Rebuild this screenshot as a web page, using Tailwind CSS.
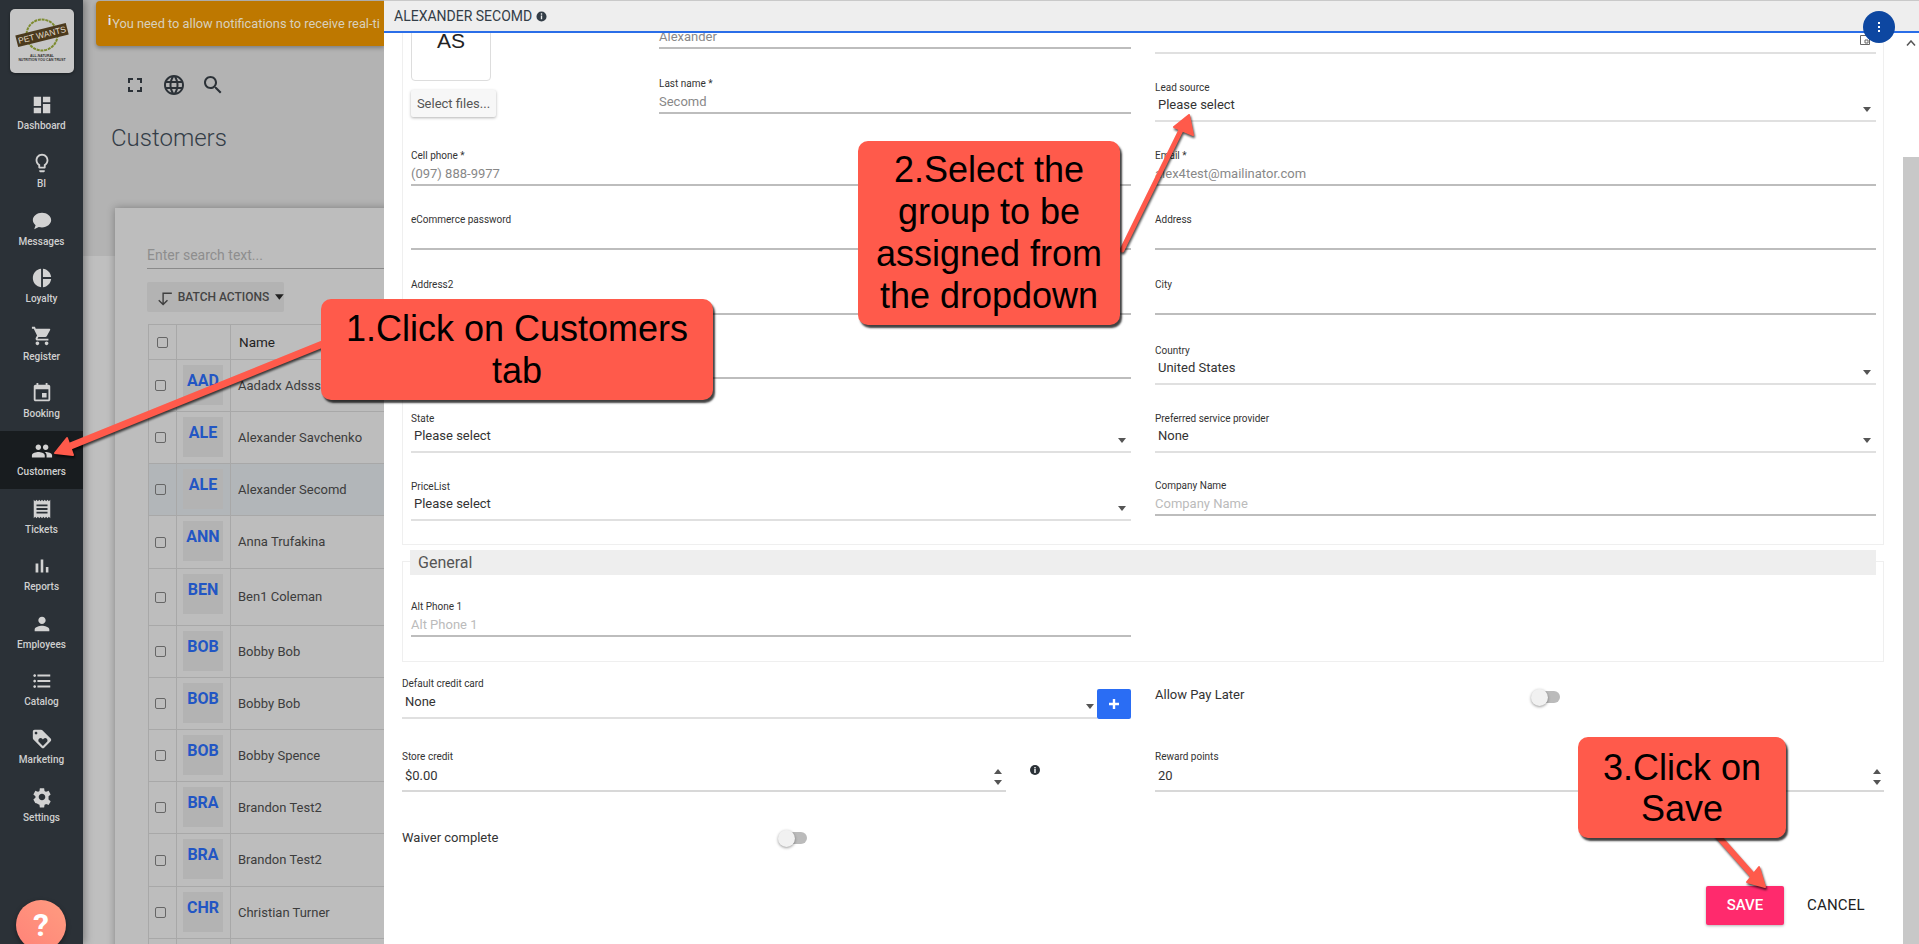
<!DOCTYPE html>
<html lang="en">
<head>
  <meta charset="UTF-8" />
  <title>Customers</title>
  <script src="https://cdn.jsdelivr.net/npm/@tailwindcss/browser@4"></script>
</head>
<body class="bg-white">
<div class="relative flex h-[944px] w-[1919px] overflow-hidden font-['Roboto',sans-serif]">

  <!-- sidebar -->
  <aside class="relative z-10 h-full w-[83px] shrink-0 bg-[#2b3137] shadow-[2px_0_8px_rgba(0,0,0,0.35)]">
    <div class="pl-[10px] pt-[9px]">
      <div class="h-[64px] w-[64px] rounded-[5px] bg-[#c6c6c6] shadow-[0_1px_3px_rgba(0,0,0,0.4)]">
        <svg viewBox="0 0 64 64" class="h-[64px] w-[64px]">
          <circle cx="32" cy="26" r="15.5" fill="none" stroke="#7d8b2f" stroke-width="2" stroke-dasharray="3 0.8" />
          <g transform="rotate(-14 32 26)">
            <rect x="6" y="20" width="52" height="12" fill="#4b3a1d" />
            <text x="32" y="29" text-anchor="middle" font-family="Liberation Sans" font-size="8.5" fill="#e2dccb">PET WANTS</text>
          </g>
          <text x="32" y="48" text-anchor="middle" font-family="Liberation Sans" font-size="3.4" font-weight="bold" fill="#333">ALL-NATURAL</text>
          <text x="32" y="52" text-anchor="middle" font-family="Liberation Sans" font-size="3.4" font-weight="bold" fill="#333">NUTRITION YOU CAN TRUST</text>
        </svg>
      </div>
    </div>
    <nav id="nav" class="mt-[12.4px]"></nav>
    <div class="absolute left-[16px] top-[900px] flex h-[50px] w-[50px] items-center justify-center rounded-full bg-gradient-to-tr from-[#ff8278] to-[#ff9c80] text-[32px] font-bold leading-none text-white shadow-[0_2px_5px_rgba(0,0,0,0.4)]">?</div>
  </aside>

  <!-- page behind the panel, dimmed -->
  <main class="h-full flex-1 overflow-hidden bg-[linear-gradient(#b3b3b3_256px,#bfbfbf_256px)]">
    <div class="ml-[13px] mt-[1px] flex h-[45px] w-[288px] items-center overflow-hidden whitespace-nowrap rounded-l-[4px] bg-[#be7800] pl-[12px] text-[12.8px] text-[#d8d0bd] shadow-[0_2px_4px_rgba(0,0,0,0.3)]">
      <span class="-mt-[6px] pr-[1px] text-[12px] font-bold text-[#e4e4e4]">i</span><span>You need to allow notifications to receive real-ti</span>
    </div>
    <div class="ml-[40px] mt-[27px] flex gap-[15px] text-[#2b3137]">
      <svg viewBox="0 0 24 24" class="h-[24px] w-[24px]" fill="currentColor"><path d="M7 14H5v5h5v-2H7v-3zm-2-4h2V7h3V5H5v5zm12 7h-3v2h5v-5h-2v3zM14 5v2h3v3h2V5h-5z"/></svg>
      <svg viewBox="0 0 24 24" class="h-[24px] w-[24px]" fill="currentColor"><path d="M11.99 2C6.47 2 2 6.48 2 12s4.47 10 9.99 10C17.52 22 22 17.52 22 12S17.52 2 11.99 2zm6.93 6h-2.95c-.32-1.25-.78-2.45-1.38-3.56 1.84.63 3.37 1.91 4.33 3.56zM12 4.04c.83 1.2 1.48 2.53 1.91 3.96h-3.82c.43-1.43 1.08-2.76 1.91-3.96zM4.26 14C4.1 13.36 4 12.69 4 12s.1-1.36.26-2h3.38c-.08.66-.14 1.32-.14 2 0 .68.06 1.34.14 2H4.26zm.82 2h2.95c.32 1.25.78 2.45 1.38 3.56-1.84-.63-3.37-1.9-4.33-3.56zm2.95-8H5.08c.96-1.66 2.49-2.93 4.33-3.56C8.81 5.55 8.35 6.75 8.03 8zM12 19.96c-.83-1.2-1.48-2.53-1.91-3.96h3.82c-.43 1.43-1.08 2.76-1.91 3.96zM14.34 14H9.66c-.09-.66-.16-1.32-.16-2 0-.68.07-1.35.16-2h4.68c.09.65.16 1.32.16 2 0 .68-.07 1.34-.16 2zm.25 5.56c.6-1.11 1.06-2.31 1.38-3.56h2.95c-.96 1.65-2.49 2.93-4.33 3.56zM16.36 14c.08-.66.14-1.32.14-2 0-.68-.06-1.34-.14-2h3.38c.16.64.26 1.31.26 2s-.1 1.36-.26 2h-3.38z"/></svg>
      <svg viewBox="0 0 24 24" class="h-[24px] w-[24px]" fill="currentColor"><path d="M15.5 14h-.79l-.28-.27C15.41 12.59 16 11.11 16 9.5 16 5.91 13.09 3 9.5 3S3 5.91 3 9.5 5.91 16 9.5 16c1.61 0 3.09-.59 4.23-1.57l.27.28v.79l5 4.99L20.49 19l-4.99-5zm-6 0C7.01 14 5 11.99 5 9.5S7.01 5 9.5 5 14 7.01 14 9.5 11.99 14 9.5 14z"/></svg>
    </div>
    <h1 class="ml-[28px] mt-[25px] text-[24px] font-light leading-[32px] text-[#333d47]">Customers</h1>

    <section class="ml-[32px] mt-[54px] h-[800px] w-[1000px] bg-[#bdbdbd] pl-[32px] pt-[32px] shadow-[0_0_8px_rgba(0,0,0,0.3)]">
      <div class="h-[29px] border-b border-[#8a8a8a] pt-[1px] text-[14px] leading-[28px] text-[#8e8e8e]">Enter search text...</div>
      <div class="mt-[13px] flex h-[30px] w-[137px] items-center gap-[5px] rounded-[2px] bg-[#b3b3b3] pl-[10px] text-[12px] font-medium text-[#444]">
        <svg viewBox="0 0 18 16" class="mt-[2px] h-[17px] w-[18px]" fill="none" stroke="#3f3f3f" stroke-width="1.6"><path d="M17 2H7v13M2 10l5 5 5-5"/></svg>
        <span class="whitespace-nowrap">BATCH ACTIONS</span>
        <svg viewBox="0 0 8 5" class="ml-[1px] h-[6px] w-[10px]" fill="#222"><path d="M0 0h8L4 5z"/></svg>
      </div>
      <div id="table" class="ml-[1px] mt-[12px] border-t border-l border-[#a8a8a8]"></div>
    </section>
  </main>

  <!-- customer panel -->
  <div class="absolute bottom-0 left-[384px] right-0 top-0 z-20 flex flex-col bg-white">
    <header class="relative z-10 flex h-[33px] shrink-0 items-center gap-[4px] border-t border-t-[#c9c9c9] border-b-2 border-b-[#2a6ee8] bg-[#eeeeee] pl-[10px] text-[14px] text-[#333d47]">
      <span class="whitespace-nowrap">ALEXANDER SECOMD</span>
      <svg viewBox="0 0 24 24" class="h-[11px] w-[11px]" fill="#333d47"><path d="M12 1a11 11 0 100 22 11 11 0 000-22zm1.5 17h-3v-8h3v8zm0-10h-3V5h3v3z"/></svg>
    </header>
    <div class="flex min-h-0 flex-1">
      <div class="min-w-0 flex-1 pl-[18px] pr-[19px] text-[#333]">

        <div class="border-x border-b border-[#efefef] pb-[23px] pl-[8px] pr-[7px]">
          <div class="flex gap-[24px]">

            <div class="w-[720px] shrink-0">
              <div class="flex h-[84px]">
                <div class="w-[248px] shrink-0">
                  <div class="-mt-[32px] flex h-[80px] w-[80px] items-center justify-center rounded-[4px] border border-[#dddddd] font-['Liberation_Sans',sans-serif] text-[21px] text-[#222]">AS</div>
                  <div class="mt-[9px] flex h-[27px] w-[85px] items-center justify-center whitespace-nowrap rounded-[2px] bg-[#f7f7f7] text-[13px] text-[#555] shadow-[0_1px_3px_rgba(0,0,0,0.3)]">Select files...</div>
                </div>
                <div class="flex-1">
                  <div class="flow-root h-[16px] border-b-2 border-[#bdbdbd]"><div class="-mt-[7px] text-[13px] leading-[22px] text-[#888]">Alexander</div></div>
                  <div class="mt-[27px] h-[38px] border-b-2 border-[#bdbdbd] pt-[1px]">
                    <div class="text-[10px] leading-[14px] text-[#333]">Last name *</div>
                    <div class="text-[13px] leading-[22px] text-[#888]">Secomd</div>
                  </div>
                </div>
              </div>
              <div class="mt-[31px] h-[38px] border-b-2 border-[#bdbdbd] pt-[1px]">
                <div class="text-[10px] leading-[14px] text-[#333]">Cell phone *</div>
                <div class="text-[13px] leading-[22px] text-[#888]">(097) 888-9977</div>
              </div>
              <div class="mt-[26px] h-[38px] border-b-2 border-[#bdbdbd] pt-[1px]">
                <div class="text-[10px] leading-[14px] text-[#333]">eCommerce password</div>
              </div>
              <div class="mt-[27px] h-[38px] border-b-2 border-[#bdbdbd] pt-[1px]">
                <div class="text-[10px] leading-[14px] text-[#333]">Address2</div>
              </div>
              <div class="mt-[26px] h-[38px] border-b-2 border-[#bdbdbd]"></div>
              <div class="mt-[32px] h-[42px] border-b-2 border-[#e0e0e0] pt-[1px]">
                <div class="text-[10px] leading-[14px] text-[#333]">State</div>
                <div class="flex h-[20px] items-end justify-between pl-[3px] pr-[5px] text-[13px]"><span class="self-center">Please select</span><svg viewBox="0 0 8 5" class="mb-[3px] h-[5px] w-[8px]" fill="#555"><path d="M0 0h8L4 5z"/></svg></div>
              </div>
              <div class="mt-[26px] h-[42px] border-b-2 border-[#e0e0e0] pt-[1px]">
                <div class="text-[10px] leading-[14px] text-[#333]">PriceList</div>
                <div class="flex h-[20px] items-end justify-between pl-[3px] pr-[5px] text-[13px]"><span class="self-center">Please select</span><svg viewBox="0 0 8 5" class="mb-[3px] h-[5px] w-[8px]" fill="#555"><path d="M0 0h8L4 5z"/></svg></div>
              </div>
            </div>

            <div class="min-w-0 flex-1">
              <div class="flex h-[21px] items-start justify-end border-b-2 border-[#e0e0e0] pr-[5px]">
                <svg viewBox="0 0 12 12" class="mt-[1px] h-[12px] w-[12px]" fill="none" stroke="#666" stroke-width="1"><path d="M1.5 1.5h9v9h-9zM6 6h3v3H6z"/></svg>
              </div>
              <div class="mt-[26px] h-[42px] border-b-2 border-[#e0e0e0] pt-[1px]">
                <div class="text-[10px] leading-[14px] text-[#333]">Lead source</div>
                <div class="flex h-[20px] items-end justify-between pl-[3px] pr-[5px] text-[13px]"><span class="self-center">Please select</span><svg viewBox="0 0 8 5" class="mb-[3px] h-[5px] w-[8px]" fill="#555"><path d="M0 0h8L4 5z"/></svg></div>
              </div>
              <div class="mt-[26px] h-[38px] border-b-2 border-[#bdbdbd] pt-[1px]">
                <div class="text-[10px] leading-[14px] text-[#333]">Email *</div>
                <div class="text-[13px] leading-[22px] text-[#888]">alex4test@mailinator.com</div>
              </div>
              <div class="mt-[26px] h-[38px] border-b-2 border-[#bdbdbd] pt-[1px]">
                <div class="text-[10px] leading-[14px] text-[#333]">Address</div>
              </div>
              <div class="mt-[27px] h-[38px] border-b-2 border-[#bdbdbd] pt-[1px]">
                <div class="text-[10px] leading-[14px] text-[#333]">City</div>
              </div>
              <div class="mt-[28px] h-[42px] border-b-2 border-[#e0e0e0] pt-[1px]">
                <div class="text-[10px] leading-[14px] text-[#333]">Country</div>
                <div class="flex h-[20px] items-end justify-between pl-[3px] pr-[5px] text-[13px]"><span class="self-center">United States</span><svg viewBox="0 0 8 5" class="mb-[3px] h-[5px] w-[8px]" fill="#555"><path d="M0 0h8L4 5z"/></svg></div>
              </div>
              <div class="mt-[26px] h-[42px] border-b-2 border-[#e0e0e0] pt-[1px]">
                <div class="text-[10px] leading-[14px] text-[#333]">Preferred service provider</div>
                <div class="flex h-[20px] items-end justify-between pl-[3px] pr-[5px] text-[13px]"><span class="self-center">None</span><svg viewBox="0 0 8 5" class="mb-[3px] h-[5px] w-[8px]" fill="#555"><path d="M0 0h8L4 5z"/></svg></div>
              </div>
              <div class="mt-[25px] h-[38px] border-b-2 border-[#bdbdbd] pt-[1px]">
                <div class="text-[10px] leading-[14px] text-[#333]">Company Name</div>
                <div class="text-[13px] leading-[22px] text-[#bbbbbb]">Company Name</div>
              </div>
            </div>
          </div>
        </div>

        <div class="mt-[16px] h-[101px] border border-[#efefef] pl-[7px] pr-[7px]">
          <div class="-mt-[12px] flex h-[25px] items-center bg-[#eeeeee] pl-[8px] text-[16px] text-[#555]">General</div>
          <div class="ml-[1px] mt-[24px] h-[38px] w-[720px] border-b-2 border-[#bdbdbd] pt-[1px]">
            <div class="text-[10px] leading-[14px] text-[#333]">Alt Phone 1</div>
            <div class="text-[13px] leading-[22px] text-[#bbbbbb]">Alt Phone 1</div>
          </div>
        </div>

        <div class="mt-[15px] flex gap-[24px]">
          <div class="w-[729px] shrink-0">
            <div class="flex h-[42px] items-end">
              <div class="h-[42px] flex-1 border-b-2 border-[#e0e0e0]">
                <div class="text-[10px] leading-[14px] text-[#333]">Default credit card</div>
                <div class="flex h-[22px] items-end justify-between pl-[3px] pr-[3px] text-[13px]"><span class="self-center">None</span><svg viewBox="0 0 8 5" class="mb-[4px] h-[5px] w-[8px]" fill="#555"><path d="M0 0h8L4 5z"/></svg></div>
              </div>
              <div class="flex h-[30px] w-[34px] items-center justify-center rounded-[2px] bg-[#2a6df4]">
                <svg viewBox="0 0 10 10" class="h-[10px] w-[10px]" fill="#fff"><path d="M3.8 0h2.4v3.8H10v2.4H6.2V10H3.8V6.2H0V3.8h3.8z"/></svg>
              </div>
            </div>
            <div class="mt-[31px] flex items-center">
              <div class="h-[42px] w-[604px] border-b-2 border-[#d8d8d8]">
                <div class="text-[10px] leading-[14px] text-[#333]">Store credit</div>
                <div class="flex h-[24px] items-center justify-between pl-[3px] pr-[4px] text-[13px]"><span>$0.00</span>
                  <span class="flex flex-col gap-[6px] pt-[2px]"><svg viewBox="0 0 8 5" class="h-[5px] w-[8px]" fill="#555"><path d="M4 0l4 5H0z"/></svg><svg viewBox="0 0 8 5" class="h-[5px] w-[8px]" fill="#555"><path d="M0 0h8L4 5z"/></svg></span></div>
              </div>
              <svg viewBox="0 0 10 10" class="-mt-[2px] ml-[24px] h-[10px] w-[10px]"><circle cx="5" cy="5" r="5" fill="#2b3137"/><rect x="4.3" y="4" width="1.4" height="4" fill="#fff"/><rect x="4.3" y="2" width="1.4" height="1.4" fill="#fff"/></svg>
            </div>
            <div class="mt-[36px] flex h-[20px] items-center">
              <span class="w-[376px] shrink-0 text-[13px]">Waiver complete</span>
              <span class="relative flex h-[17px] w-[29px] items-center justify-end">
                <span class="h-[12px] w-[24px] rounded-full bg-[#bbbbbb]"></span>
                <span class="absolute left-0 top-0 h-[17px] w-[17px] rounded-full bg-[#f1f1f1] shadow-[0_1px_3px_rgba(0,0,0,0.4)]"></span>
              </span>
            </div>
          </div>

          <div class="min-w-0 flex-1">
            <div class="mt-[8px] flex h-[20px] items-center">
              <span class="w-[376px] shrink-0 text-[13px]">Allow Pay Later</span>
              <span class="relative mt-[4px] flex h-[17px] w-[29px] items-center justify-end">
                <span class="h-[12px] w-[24px] rounded-full bg-[#bbbbbb]"></span>
                <span class="absolute left-0 top-0 h-[17px] w-[17px] rounded-full bg-[#f1f1f1] shadow-[0_1px_3px_rgba(0,0,0,0.4)]"></span>
              </span>
            </div>
            <div class="mt-[45px] h-[42px] border-b-2 border-[#d8d8d8]">
              <div class="text-[10px] leading-[14px] text-[#333]">Reward points</div>
              <div class="flex h-[24px] items-center justify-between pl-[3px] pr-[3px] text-[13px]"><span>20</span>
                <span class="flex flex-col gap-[6px] pt-[2px]"><svg viewBox="0 0 8 5" class="h-[5px] w-[8px]" fill="#555"><path d="M4 0l4 5H0z"/></svg><svg viewBox="0 0 8 5" class="h-[5px] w-[8px]" fill="#555"><path d="M0 0h8L4 5z"/></svg></span></div>
            </div>
            <div class="mt-[94px] flex items-center justify-end pr-[18px]">
              <div class="flex h-[39px] w-[78px] items-center justify-center rounded-[2px] bg-[#ff2a6d] text-[15px] font-medium text-white shadow-[0_1px_3px_rgba(0,0,0,0.3)]">SAVE</div>
              <div class="ml-[23px] w-[59px] whitespace-nowrap text-[15px] tracking-[0.2px] text-[#222]">CANCEL</div>
            </div>
          </div>
        </div>
      </div>

      <div class="flex w-[16px] shrink-0 flex-col">
        <div class="flex h-[124px] justify-center pt-[7px]">
          <svg viewBox="0 0 10 6" class="h-[6px] w-[10px]" fill="none" stroke="#555" stroke-width="1.5"><path d="M1 5.5l4-4.5 4 4.5"/></svg>
        </div>
        <div class="flex-1 bg-[#c8c8c8]"></div>
      </div>
    </div>
  </div>

  <!-- round menu button -->
  <div class="absolute left-[1863px] top-[11px] z-30 flex h-[32px] w-[32px] flex-col items-center justify-center gap-[2px] rounded-full bg-[#0d47a1]">
    <span class="h-[2px] w-[2px] bg-white"></span><span class="h-[2px] w-[2px] bg-white"></span><span class="h-[2px] w-[2px] bg-white"></span>
  </div>

  <!-- tutorial arrows and callouts -->
  <svg class="absolute left-0 top-0 z-30 h-[944px] w-[1919px] [filter:drop-shadow(1px_2px_1px_rgba(0,0,0,0.7))]" viewBox="0 0 1919 944" fill="#ff5a4b" stroke="#ff5a4b" stroke-linecap="round" stroke-linejoin="round">
    <path d="M330 341L68 447" stroke-width="7" fill="none"/>
    <path d="M55 453L67 438L73 455z" stroke-width="2"/>
    <path d="M1122 250L1182 128" stroke-width="5" fill="none"/>
    <path d="M1189 115L1174 127L1193 135z" stroke-width="2"/>
    <path d="M1717 835L1755 878" stroke-width="6" fill="none"/>
    <path d="M1765 887L1747 882L1759 867z" stroke-width="2"/>
  </svg>
  <div class="absolute left-[321px] top-[299px] z-30 flex h-[101px] w-[392px] flex-col justify-center rounded-[10px] bg-[#ff5a4b] pt-[1px] text-center font-['Liberation_Sans',sans-serif] text-[36px] leading-[42px] text-black shadow-[2px_3px_2px_rgba(0,0,0,0.75)]">1.Click on Customers<br>tab</div>
  <div class="absolute left-[858px] top-[141px] z-30 flex h-[184px] w-[262px] flex-col justify-center rounded-[10px] bg-[#ff5a4b] text-center font-['Liberation_Sans',sans-serif] text-[36px] leading-[42px] text-black shadow-[2px_3px_2px_rgba(0,0,0,0.75)]">2.Select the<br>group to be<br>assigned from<br>the dropdown</div>
  <div class="absolute left-[1578px] top-[737px] z-30 flex h-[101px] w-[208px] flex-col justify-center rounded-[10px] bg-[#ff5a4b] text-center font-['Liberation_Sans',sans-serif] text-[36px] leading-[41px] text-black shadow-[2px_3px_2px_rgba(0,0,0,0.75)]">3.Click on<br>Save</div>
</div>

<script>
  const navItems = [
    ["Dashboard", "M3 13h8V3H3v10zm0 8h8v-6H3v6zm10 0h8V11h-8v10zm0-18v6h8V3h-8z"],
    ["BI", "M9 21c0 .55.45 1 1 1h4c.55 0 1-.45 1-1v-1H9v1zm3-19C8.14 2 5 5.14 5 9c0 2.38 1.19 4.47 3 5.74V17c0 .55.45 1 1 1h6c.55 0 1-.45 1-1v-2.26c1.81-1.27 3-3.36 3-5.74 0-3.86-3.14-7-7-7zm2.85 11.1l-.85.6V16h-4v-2.3l-.85-.6C7.8 12.16 7 10.63 7 9c0-2.76 2.24-5 5-5s5 2.24 5 5c0 1.63-.8 3.16-2.15 4.1z"],
    ["Messages", "M12 3C6.5 3 2 6.6 2 11c0 2.2 1.1 4.2 3 5.6L3.5 21l5-2.4c1.1.3 2.3.4 3.5.4 5.5 0 10-3.6 10-8s-4.5-8-10-8z"],
    ["Loyalty", "M11 2v20c-5.07-.5-9-4.79-9-10s3.93-9.5 9-10zm2.03 0v8.99H22c-.47-4.74-4.24-8.52-8.97-8.99zm0 11.01V22c4.74-.47 8.5-4.25 8.97-8.99h-8.97z"],
    ["Register", "M7 18c-1.1 0-1.99.9-1.99 2S5.9 22 7 22s2-.9 2-2-.9-2-2-2zM1 2v2h2l3.6 7.59-1.35 2.45c-.16.28-.25.61-.25.96 0 1.1.9 2 2 2h12v-2H7.42c-.14 0-.25-.11-.25-.25l.03-.12.9-1.63h7.45c.75 0 1.41-.41 1.75-1.03l3.58-6.49c.08-.14.12-.31.12-.48 0-.55-.45-1-1-1H5.21l-.94-2H1zm16 16c-1.1 0-1.99.9-1.99 2s.89 2 1.99 2 2-.9 2-2-.9-2-2-2z"],
    ["Booking", "M17 12h-5v5h5v-5zM16 1v2H8V1H6v2H5c-1.11 0-1.99.9-1.99 2L3 19c0 1.1.89 2 2 2h14c1.1 0 2-.9 2-2V5c0-1.1-.9-2-2-2h-1V1h-2zm3 18H5V8h14v11z"],
    ["Customers", "M16 11c1.66 0 2.99-1.34 2.99-3S17.66 5 16 5c-1.66 0-3 1.34-3 3s1.34 3 3 3zm-8 0c1.66 0 2.99-1.34 2.99-3S9.66 5 8 5C6.34 5 5 6.34 5 8s1.34 3 3 3zm0 2c-2.33 0-7 1.17-7 3.5V19h14v-2.5c0-2.33-4.67-3.5-7-3.5zm8 0c-.29 0-.62.02-.97.05 1.16.84 1.97 1.97 1.97 3.45V19h6v-2.5c0-2.33-4.67-3.5-7-3.5z"],
    ["Tickets", "M18 17H6v-2h12v2zm0-4H6v-2h12v2zm0-4H6V7h12v2zM3 22l1.5-1.5L6 22l1.5-1.5L9 22l1.5-1.5L12 22l1.5-1.5L15 22l1.5-1.5L18 22l1.5-1.5L21 22V2l-1.5 1.5L18 2l-1.5 1.5L15 2l-1.5 1.5L12 2l-1.5 1.5L9 2 7.5 3.5 6 2 4.5 3.5 3 2v20z"],
    ["Reports", "M5 9.2h3V19H5zM10.6 5h2.8v14h-2.8zm5.6 8H19v6h-2.8z"],
    ["Employees", "M12 12c2.21 0 4-1.79 4-4s-1.79-4-4-4-4 1.79-4 4 1.79 4 4 4zm0 2c-2.67 0-8 1.34-8 4v2h16v-2c0-2.66-5.33-4-8-4z"],
    ["Catalog", "M4 10.5c-.83 0-1.5.67-1.5 1.5s.67 1.5 1.5 1.5 1.5-.67 1.5-1.5-.67-1.5-1.5-1.5zm0-6c-.83 0-1.5.67-1.5 1.5S3.17 7.5 4 7.5 5.5 6.83 5.5 6 4.83 4.5 4 4.5zm0 12c-.83 0-1.5.68-1.5 1.5s.68 1.5 1.5 1.5 1.5-.68 1.5-1.5-.67-1.5-1.5-1.5zM7 19h14v-2H7v2zm0-6h14v-2H7v2zm0-8v2h14V5H7z"],
    ["Marketing", "M21.41 11.58l-9-9C12.05 2.22 11.55 2 11 2H4c-1.1 0-2 .9-2 2v7c0 .55.22 1.05.59 1.42l9 9c.36.36.86.58 1.41.58.55 0 1.05-.22 1.41-.59l7-7c.37-.36.59-.86.59-1.41 0-.55-.23-1.06-.59-1.42zM5.5 7C4.67 7 4 6.33 4 5.5S4.67 4 5.5 4 7 4.67 7 5.5 6.33 7 5.5 7zm11.77 8.27L13 19.54l-4.27-4.27C8.28 14.81 8 14.19 8 13.5c0-1.38 1.12-2.5 2.5-2.5.69 0 1.32.28 1.77.74l.73.72.73-.73c.45-.45 1.08-.73 1.77-.73 1.38 0 2.5 1.12 2.5 2.5 0 .69-.28 1.32-.73 1.77z"],
    ["Settings", "M19.14 12.94c.04-.3.06-.61.06-.94 0-.32-.02-.64-.07-.94l2.03-1.58c.18-.14.23-.41.12-.61l-1.92-3.32c-.12-.22-.37-.29-.59-.22l-2.39.96c-.5-.38-1.03-.7-1.62-.94l-.36-2.54c-.04-.24-.24-.41-.48-.41h-3.84c-.24 0-.43.17-.47.41l-.36 2.54c-.59.24-1.13.57-1.62.94l-2.39-.96c-.22-.08-.47 0-.59.22L2.74 8.87c-.12.21-.08.47.12.61l2.03 1.58c-.05.3-.09.63-.09.94s.02.64.07.94l-2.03 1.58c-.18.14-.23.41-.12.61l1.92 3.32c.12.22.37.29.59.22l2.39.96c.5.38 1.03.7 1.62.94l.36 2.54c.05.24.24.41.48.41h3.84c.24 0 .44-.17.47-.41l.36-2.54c.59-.24 1.13-.56 1.62-.94l2.39.96c.22.08.47 0 .59-.22l1.92-3.32c.12-.22.07-.47-.12-.61l-2.01-1.58zM12 15.6c-1.98 0-3.6-1.62-3.6-3.6s1.62-3.6 3.6-3.6 3.6 1.62 3.6 3.6-1.62 3.6-3.6 3.6z"]
  ];

  document.getElementById("nav").innerHTML = navItems.map(([name, d]) => `
    <div class="flex h-[57.6px] flex-col items-center pt-[9px] ${name === "Customers" ? "bg-[#181c1f]" : ""}">
      <svg viewBox="0 0 24 24" class="h-[22px] w-[22px]" fill="#d2d2d2"><path d="${d}"/></svg>
      <span class="text-[10px] font-medium leading-[20px] text-[#cfcfcf]">${name}</span>
    </div>`).join("");

  // [initials, name, row height, selected]
  const customers = [
    ["AAD", "Aadadx Adsss", 52],
    ["ALE", "Alexander Savchenko", 52],
    ["ALE", "Alexander Secomd", 52, true],
    ["ANN", "Anna Trufakina", 53],
    ["BEN", "Ben1 Coleman", 57],
    ["BOB", "Bobby Bob", 52],
    ["BOB", "Bobby Bob", 52],
    ["BOB", "Bobby Spence", 52],
    ["BRA", "Brandon Test2", 52],
    ["BRA", "Brandon Test2", 53],
    ["CHR", "Christian Turner", 52],
    ["", "", 52]
  ];

  document.getElementById("table").innerHTML = `
    <div class="flex h-[35px] border-b border-[#a8a8a8]">
      <div class="flex w-[28px] items-center border-r border-[#a8a8a8] pl-[8px]"><span class="h-[11px] w-[11px] rounded-[2px] border border-[#666]"></span></div>
      <div class="w-[54px] border-r border-[#a8a8a8]"></div>
      <div class="flex items-center pl-[8px] text-[13.5px] text-[#222]">Name</div>
    </div>` + customers.map(([initials, name, height, selected]) => `
    <div class="flex border-b border-[#a8a8a8] ${selected ? "bg-[#b2b6b9]" : ""}" style="height:${height}px">
      <div class="flex w-[28px] items-center border-r border-[#a8a8a8] pl-[6px]"><span class="h-[11px] w-[11px] rounded-[2px] border border-[#666]"></span></div>
      <div class="w-[54px] border-r border-[#a8a8a8] pl-[6px] pt-[5px]">
        ${initials ? `<div class="h-[40px] w-[40px] bg-[#b3b3b3] text-center text-[16px] font-bold leading-[32px] text-[#2256c4]">${initials}</div>` : ""}
      </div>
      <div class="flex items-center pl-[7px] text-[13px] text-[#3c3c3c]">${name}</div>
    </div>`).join("");
</script>
</body>
</html>
